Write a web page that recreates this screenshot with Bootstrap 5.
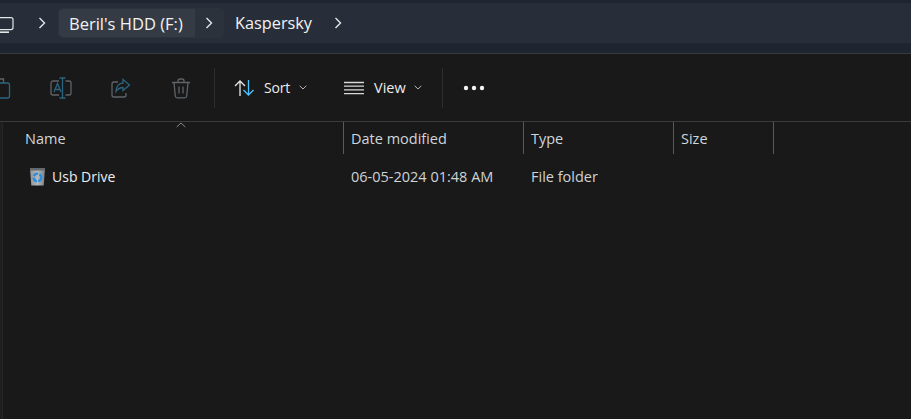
<!DOCTYPE html>
<html lang="en">
<head>
<meta charset="utf-8">
<title>Kaspersky</title>
<link href="https://cdn.jsdelivr.net/npm/bootstrap@5.3.0/dist/css/bootstrap.min.css" rel="stylesheet">
<style>
html,body{height:100%;margin:0;background:#191919;overflow:hidden}
body{font-family:"Open Sans","Noto Sans",sans-serif;color:#fff;width:911px;height:419px}
.topband{height:54px;background:#1c2530;border-bottom:1px solid #3b3b3b;padding-top:3px}
.addr{height:40px;background:#272e39}
.crumb{font-size:16.5px;color:#f2f2f2;line-height:30px}
.pc{width:14px;height:19px;margin-right:23px}
.chev{width:10px;height:12px;flex:none}
.hdd{margin-left:11px;height:30px;border-radius:5px;background:#2b323c;overflow:hidden;border:1px solid #2c333d}
.hdd-name{background:#353b45;width:136px;padding-left:10px;height:100%;white-space:nowrap}
.hdd-arrow{width:28px;height:100%}
.kasp{margin-left:11px;margin-right:21px;font-size:16.3px}
.tools{height:68px;background:#191919;border-bottom:1px solid #3b3b3b}
.tool-i{width:24px;height:24px;flex:none}
.vsep{width:1px;height:40px;background:#2e2e2e;flex:none}
.tlabel{font-size:14px;letter-spacing:-.2px;color:#ececec}
.tlabel-view{font-size:14.5px;letter-spacing:0}
.cv{width:8px;height:5px;flex:none}
.sidebar-wrap{height:297px}
.rail{width:3px;background:#1f1f1f;border-right:1px solid #262626;flex:none}
.hdr{height:32px;position:relative;font-size:14.5px;color:#cfd6dc}
.hc{height:100%;padding-left:7px;border-right:1px solid #5a5a5a;line-height:34px;flex:none}
.hc-name{width:341px;padding-left:22px}
.hc-date{width:180px}
.hc-type{width:150px}
.hc-size{width:100px}
.caret-up{position:absolute;left:173px;top:0;width:10px;height:6px}
.frow{margin-top:8px;height:30px;font-size:14.5px;color:#cfd3d6;line-height:30px}
.fc-name{width:341px;padding-left:26px;color:#eee;flex:none;font-size:14px}
.fc-date{width:180px;padding-left:7px;flex:none}
.fc-type{padding-left:7px;flex:none}
.bin{width:17px;height:20px;margin-right:6px;flex:none}
</style>
</head>
<body class="d-flex flex-column">
<div class="topband">
  <div class="addr d-flex align-items-center">
    <svg class="pc" viewBox="0 0 14 19" fill="none" stroke="#e4e6e8" stroke-width="1.2"><rect x="-5" y="3.6" width="18" height="12" rx="2"/><path d="M-1 18.2H9" stroke-width="1.6"/></svg>
    <svg class="chev" viewBox="0 0 10 12" fill="none" stroke="#e4e6e8" stroke-width="1.4"><path d="M2.500 1 7.500 6 2.500 11"/></svg>
    <div class="hdd d-flex align-items-center crumb">
      <div class="hdd-name">Beril's HDD (F:)</div>
      <div class="hdd-arrow d-flex align-items-center justify-content-center"><svg class="chev" viewBox="0 0 10 12" fill="none" stroke="#e4e6e8" stroke-width="1.4"><path d="M2.500 1 7.500 6 2.500 11"/></svg></div>
    </div>
    <div class="crumb kasp">Kaspersky</div>
    <svg class="chev" viewBox="0 0 10 12" fill="none" stroke="#e4e6e8" stroke-width="1.4"><path d="M2.500 1 7.500 6 2.500 11"/></svg>
  </div>
</div>
<div class="tools d-flex align-items-center">
  <svg class="tool-i" style="width:12px;margin-right:37px" viewBox="0 0 12 24" fill="none" stroke-width="1.3"><path d="M-3 7V3H3.500V7" stroke="#5f6468"/><rect x="-3" y="7" width="12.500" height="15" rx="2" stroke="#2c6480"/></svg>
  <svg class="tool-i" style="margin-right:35px" viewBox="0 0 24 24" fill="none" stroke-width="1.3"><path d="M10 5H4a2 2 0 0 0-2 2v10a2 2 0 0 0 2 2h6M16.500 5H20a2 2 0 0 1 2 2v10a2 2 0 0 1-2 2h-3.500" stroke="#5f6468"/><path d="M10.500 2h6M10.500 22h6M13.500 2v20M5 16 8.500 7.500 12 16M6 13.500h5" stroke="#2c6480"/></svg>
  <svg class="tool-i" style="margin-right:37px" viewBox="0 0 24 24" fill="none" stroke-width="1.3"><path d="M10 6H6a2 2 0 0 0-2 2v11a2 2 0 0 0 2 2h10a2 2 0 0 0 2-2v-2" stroke="#5f6468"/><path d="M15 3.500 21.500 9 15 14.500V11.500c-3 0-5 1-7 4 0-5 3-8.500 7-8.500Z" stroke="#2c6480"/></svg>
  <svg class="tool-i" style="margin-right:21px" viewBox="0 0 24 24" fill="none" stroke="#5f6468" stroke-width="1.3"><path d="M3 6.500h18M9 6.500V5a2 2 0 0 1 2-2h2a2 2 0 0 1 2 2v1.500M5 6.500 6.300 20a2 2 0 0 0 2 1.800h7.400a2 2 0 0 0 2-1.800L19 6.500M10 10.500v7M14 10.500v7"/></svg>
  <div class="vsep" style="margin-right:19px"></div>
  <svg class="tool-i" style="width:22px;margin-right:8px" viewBox="0 0 22 24" fill="none" stroke-width="1.3"><path d="M6 20V5M1 10l5-5 5 5" stroke="#e8e8e8"/><path d="M14.500 4v15M9.500 14l5 5 5-5" stroke="#4cc2ff"/></svg>
  <span class="tlabel" style="margin-right:9px">Sort</span>
  <svg class="cv" style="margin-right:37px" viewBox="0 0 8 5" fill="none" stroke="#b5b5b5" stroke-width="1"><path d="M.7.8 4 4 7.300.8"/></svg>
  <svg class="tool-i" style="width:20px;margin-right:10px" viewBox="0 0 20 24" fill="none" stroke="#d8d8d8" stroke-width="1.300"><path d="M0 6.500h20M0 10.200h20M0 13.900h20M0 17.600h20"/></svg>
  <span class="tlabel tlabel-view" style="margin-right:8px">View</span>
  <svg class="cv" style="margin-right:20px" viewBox="0 0 8 5" fill="none" stroke="#b5b5b5" stroke-width="1"><path d="M.7.8 4 4 7.300.8"/></svg>
  <div class="vsep" style="margin-right:20px"></div>
  <svg style="width:22px;height:6px" viewBox="0 0 22 6" fill="#f2f2f2"><circle cx="3" cy="3" r="2.200"/><circle cx="11" cy="3" r="2.200"/><circle cx="19" cy="3" r="2.200"/></svg>
</div>
<div class="sidebar-wrap d-flex flex-grow-1">
  <div class="rail"></div>
  <div class="flex-grow-1">
    <div class="hdr d-flex">
      <svg class="caret-up" viewBox="0 0 10 6" fill="none" stroke="#8a8a8a" stroke-width="1"><path d="M.7 5 5 1 9.300 5"/></svg>
      <div class="hc hc-name">Name</div>
      <div class="hc hc-date">Date modified</div>
      <div class="hc hc-type">Type</div>
      <div class="hc hc-size">Size</div>
    </div>
    <div class="frow d-flex">
      <div class="fc-name d-flex align-items-center">
        <svg class="bin" viewBox="0 0 17 20"><defs><linearGradient id="bg" x1="0" x2="1"><stop offset="0" stop-color="#8f9499"/><stop offset=".5" stop-color="#b4b9bd"/><stop offset="1" stop-color="#7c8085"/></linearGradient></defs><path d="M1 1.500h15l-1.300 17H2.300Z" fill="url(#bg)"/><path d="M1 1h15v2.500H1Z" fill="#63686c"/><circle cx="8.500" cy="10.500" r="3.800" fill="none" stroke="#2a8de0" stroke-width="2.300" stroke-dasharray="5 1.500"/></svg>
        <span>Usb Drive</span>
      </div>
      <div class="fc-date">06-05-2024 01:48 AM</div>
      <div class="fc-type">File folder</div>
    </div>
  </div>
</div>
</body>
</html>
